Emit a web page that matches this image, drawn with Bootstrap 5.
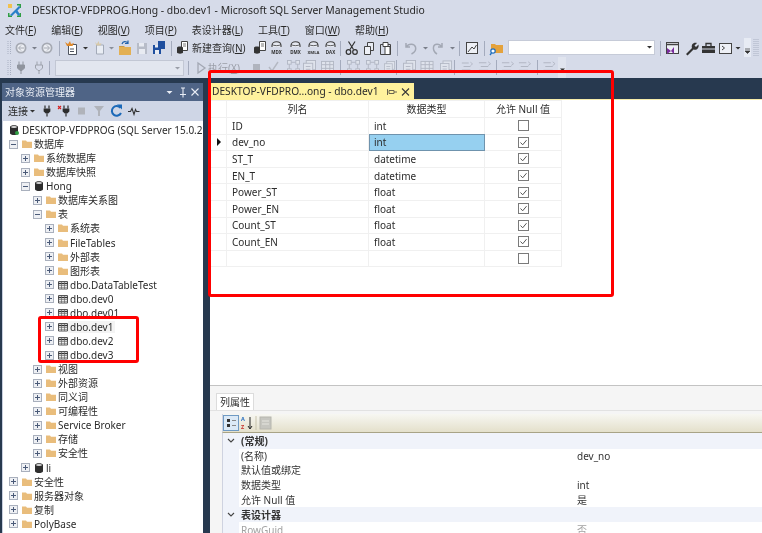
<!DOCTYPE html>
<html lang="zh-CN">
<head>
<meta charset="utf-8">
<title>SSMS</title>
<link href="https://cdn.jsdelivr.net/npm/bootstrap@5.3.0/dist/css/bootstrap.min.css" rel="stylesheet">
<style>
html,body{margin:0;padding:0;width:762px;height:533px;overflow:hidden;background:#d6dbe9;}
body{font-family:"Noto Sans","Noto Sans CJK SC",sans-serif;font-size:10px;line-height:1;color:#222;position:relative;filter:blur(.3px);}
svg{display:block;flex:none;}
.app-title{height:22px;padding:0 0 2px 7px;gap:10px;font-size:10.4px;color:#262626;}
.app-menu{height:16px;padding-left:5px;gap:15px;color:#2a2a2a;}
.app-tb{height:19px;}
.app-tb2{height:21px;}
.tb-txt{width:54px;color:#2a2a2a;white-space:nowrap;}
.tb-txt2{width:31px;color:#9a9ea8;white-space:nowrap;}
.tb-combo{width:147px;height:15px;margin:0 2px;background:#fff;border:1px solid #c6cbd8;}
.tb-rest{flex:1;height:100%;}
.app-main{height:455px;background:#27394f;}
.oe{width:201px;margin-left:2px;padding-top:5px;}
.oe-head{height:18px;padding:0 3px;background:#4f6486;color:#e9edf5;}
.oe-tools{height:20px;background:#cfd6e6;padding-left:6px;color:#2a2a2a;}
.oe-tree{flex:1;background:#fff;padding-top:2px;overflow:hidden;border-left:1px solid #c8cfdf;}
.tree-row{height:14.07px;white-space:nowrap;color:#2b2b2b;}
.lv0{padding-left:6px;}.lv1{padding-left:6px;}.lv2{padding-left:18px;}.lv3{padding-left:30px;}.lv4{padding-left:42px;}
.exp{width:9px;height:9px;margin-right:4px;}
.ico{width:10px;height:10px;margin-right:2px;}
.ico-root{margin-right:3px;}
.hl-row{background:#f4f4f4;padding:1px 2px;margin-left:-2px;}
.work{margin-left:7px;width:552px;padding-top:5px;}
.tab-strip{height:17px;flex:none;border-bottom:1px solid #f6ecaa;}
.doc-tab{width:204px;height:17px;background:#fff29d;padding:0 4px 0 2px;color:#2a2a2a;white-space:nowrap;font-size:10.2px;}
.doc-grid{height:285px;flex:none;background:#fff;}
.col-tbl{border-collapse:collapse;table-layout:fixed;width:351px;color:#2c2c2c;}
.col-tbl td,.col-tbl th{height:16.6px;padding:0 0 0 5px;border:1px solid #f0f0f0;font-weight:400;white-space:nowrap;vertical-align:middle;}
.col-tbl th{text-align:center;padding:0;height:17px;}
.col-tbl td.cm,.col-tbl th.cm{width:16px;padding:0;}
.c-name{width:142px;}.c-type{width:116px;}.c-null{width:77px;}
.col-tbl td.cn{padding:0;}
.col-tbl td.csel{background:#96d0f0;outline:1px solid #6f93ad;outline-offset:-1px;}
.col-tbl svg{margin:auto;}
.prop{flex:1;min-height:0;overflow:hidden;background:#f5f5f5;border-top:1px solid #c3c3c3;}
.prop-tabs{height:25px;padding:7px 0 0 6px;border-bottom:1px solid #e2e2e2;}
.prop-tab{width:38px;height:17px;background:#fff;border:1px solid #dcdcdc;border-bottom:0;color:#2c2c2c;}
.prop-body{padding:3px 0 0 12px;}
.prop-bar{height:19px;background:linear-gradient(#f7f7f2,#e4e0cb);border-bottom:1px solid #a8a386;border-left:1px solid #cfd3e0;}
.prop-grid{background:#fff;border-left:1px solid #cfd3e0;}
.prop-row{height:14.6px;color:#333;}
.prop-gut{width:16px;height:100%;background:#f0f3fa;}
.prop-name{width:336px;padding-left:2px;}
.prop-val{padding-left:2px;}
.prop-sec{height:15.5px;background:#f0f3fa;font-weight:700;color:#333;}
.prop-off{color:#a2a2a2;}
.red-box{position:absolute;border:3px solid #f00;border-radius:3px;pointer-events:none;}
.red-a{left:208px;top:70px;width:406px;height:227px;}
.red-b{left:38px;top:316px;width:101px;height:47px;}
</style>
</head>
<body>
<svg width="0" height="0" class="position-absolute">
<defs>
<symbol id="plus" viewBox="0 0 9 9"><rect x=".5" y=".5" width="8" height="8" fill="#eef0f4" stroke="#a9b0bd"/><path d="M2 4.500h5M4.500 2v5" stroke="#4a5a78"/></symbol>
<symbol id="minus" viewBox="0 0 9 9"><rect x=".5" y=".5" width="8" height="8" fill="#eef0f4" stroke="#a9b0bd"/><path d="M2 4.500h5" stroke="#4a5a78"/></symbol>
<symbol id="folder" viewBox="0 0 10 10"><path d="M0 1.500h4l1 1.200h5V9H0z" fill="#e9bd7c"/></symbol>
<symbol id="db" viewBox="0 0 10 10"><path d="M1 2c0-2.400 8-2.400 8 0v6.200c0 2.400-8 2.400-8 0z" fill="#2e2e2e"/><ellipse cx="5" cy="2" rx="3" ry="1" fill="#d8d8d8"/></symbol>
<symbol id="tbl" viewBox="0 0 10 10"><path d="M.5 1.500h9v7.500h-9z" fill="#fff" stroke="#555"/><path d="M.5 3.500h9" stroke="#333" stroke-width="1.500"/><path d="M.5 5.500h9M.5 7.300h9M3.500 2v7M6.500 2v7" stroke="#666" stroke-width=".7"/></symbol>
<symbol id="chk" viewBox="0 0 11 11"><rect x=".5" y=".5" width="10" height="10" fill="#fff" stroke="#7a7a7a"/><path d="M2.500 5.500l2.200 2.300 3.800-4.600" fill="none" stroke="#555"/></symbol>
<symbol id="unchk" viewBox="0 0 11 11"><rect x=".5" y=".5" width="10" height="10" fill="#fff" stroke="#7a7a7a"/></symbol>
<symbol id="dome" viewBox="0 0 15 14"><path d="M3 7V5.500C3 .5 12 .5 12 5.500V7" fill="#e6e9f1" stroke="#3d3d3d" stroke-width="1.100"/><path d="M3 4.500c1.500 1.500 7.500 1.500 9 0" fill="none" stroke="#3d3d3d" stroke-width=".8"/></symbol>
<symbol id="plug" viewBox="0 0 10 14"><path d="M2.500 0v4M7.500 0v4" stroke="currentColor" stroke-width="1.500"/><path d="M.8 4h8.400v3.500L6.500 10h-3L.8 7.500z" fill="currentColor"/><path d="M5 10v4" stroke="currentColor" stroke-width="1.500"/></symbol>
<symbol id="nodes" viewBox="0 0 14 14"><g fill="#dfe3ec" stroke="#b2b7c4"><rect x=".5" y=".5" width="4" height="4"/><rect x="9.500" y=".5" width="4" height="4"/><rect x=".5" y="9.500" width="4" height="4"/><rect x="9.500" y="9.500" width="4" height="4"/></g><path d="M4.500 2.500h5M2.500 4.500v5M11.500 4.500v5" stroke="#b2b7c4"/></symbol>
<symbol id="stack" viewBox="0 0 14 14"><g fill="#dfe3ec" stroke="#b2b7c4"><rect x="3.500" y=".5" width="10" height="10"/><rect x=".5" y="3.500" width="10" height="10"/></g><path d="M3 7h5M3 10h5" stroke="#b2b7c4"/></symbol>
<symbol id="grid2" viewBox="0 0 14 14"><rect x=".5" y="1.500" width="13" height="11" fill="#dfe3ec" stroke="#b2b7c4"/><path d="M.5 5h13M.5 9h13M5 1.500v11M9.500 1.500v11" stroke="#b2b7c4"/></symbol>
<symbol id="lines" viewBox="0 0 14 14"><path d="M1 3h8M3 7h8M1 11h10" stroke="#b2b7c4" stroke-width="1.200"/><path d="M11 2l2.500 2L11 6" fill="none" stroke="#b2b7c4"/></symbol>
</defs>
</svg>

<div class="app-title d-flex align-items-center">
<svg width="15" height="15" viewBox="0 0 15 15"><path d="M1 1h4v1.500H2.500V5H1zM14 1v4h-1.500V2.500H10V1zM1 14v-4h1.500v2.500H5V14zM14 14h-4v-1.500h2.500V10H14z" fill="#2f9e44"/><path d="M1 1h4v4H1z" fill="#f2c14e"/><path d="M3 12l9-9 1.500 1.500-3 3 2.500 4-1.500 1.500-3-3.500-3.500 3.500z" fill="#2a7fc9"/></svg>
<span>DESKTOP-VFDPROG.Hong - dbo.dev1 - Microsoft SQL Server Management Studio</span>
</div>

<div class="app-menu d-flex align-items-center">
<span>文件(<u>F</u>)</span><span>编辑(<u>E</u>)</span><span>视图(<u>V</u>)</span><span>项目(<u>P</u>)</span><span>表设计器(<u>L</u>)</span><span>工具(<u>T</u>)</span><span>窗口(<u>W</u>)</span><span>帮助(<u>H</u>)</span>
</div>

<div class="app-tb d-flex align-items-center">
<svg width="192" height="19" viewBox="0 0 192 19">
<path d="M8 3v14M10.500 3v14" stroke="#a9b0c2" stroke-dasharray="1 1"/>
<circle cx="21" cy="10" r="4.600" fill="#eceef3" stroke="#a6aab3" stroke-width="1.800"/><path d="M24 10h-5M21 7.500L18.500 10l2.500 2.500" fill="none" stroke="#a6aab3"/>
<path d="M32 9h5l-2.500 2.500z" fill="#7a7f8a"/>
<circle cx="47" cy="10" r="4.600" fill="#eceef3" stroke="#a6aab3" stroke-width="1.800"/><path d="M44 10h5M47 7.500l2.500 2.500L47 12.500" fill="none" stroke="#a6aab3"/>
<path d="M59.500 3v15M171.500 3v15" stroke="#a4abbd"/>
<path d="M68.500 6.500h8v10h-8z" fill="#fff" stroke="#4f5560"/><path d="M65 4l3 2 2-3 1 3 3-1-1.500 3H67z" fill="#e08a2c"/><path d="M70 11h4M70 13.500h4" stroke="#4f5560"/>
<path d="M83 9h5l-2.500 2.500z" fill="#333"/>
<path d="M96.500 7h7v9h-7z" fill="#e9edf4" stroke="#a3aab8"/><path d="M95 4l2 2 1.500-3 1 3 2-1-1 2.500h-4z" fill="#d7c9a8"/>
<path d="M109 9h5l-2.500 2.500z" fill="#8a8f9a"/>
<path d="M119 9h12v8h-12z" fill="#e3b054"/><path d="M119 8h5l1 1h-6z" fill="#c99a48"/><path d="M122 6c1-3 4-3 6-1M128 2.500V5.500h-3" fill="none" stroke="#2364ad" stroke-width="1.200"/>
<path d="M137 5h10v11h-10z" fill="#b7bcc8"/><path d="M139 5h5v3.500h-5zM139 11h6v5h-6z" fill="#e8ebf2"/>
<path d="M158 3h7v8h-7z" fill="#1f4f9f"/><path d="M153 7h8v9h-8z" fill="#1f4f9f"/><path d="M155 12h4v4h-4zM155 7h3v2.500h-3z" fill="#e8ebf2"/>
<path d="M181.500 3.500h6v9h-6z" fill="#fff" stroke="#444"/><path d="M183 6h3M183 8h3" stroke="#555" stroke-width=".8"/><path d="M177 9.500c0-1.500 6-1.500 6 0v5c0 1.500-6 1.500-6 0z" fill="#333"/>
</svg>
<span class="tb-txt">新建查询(<u>N</u>)</span>
<svg width="260" height="19" viewBox="247 0 260 19">
<path d="M260.500 3.500h6v9h-6z" fill="#fff" stroke="#444"/><path d="M262 6h3M262 8h3" stroke="#555" stroke-width=".8"/><path d="M255 9.500c0-1.500 6-1.500 6 0v5c0 1.500-6 1.500-6 0z" fill="#333"/>
<use href="#dome" x="270" y="2" width="15" height="14"/><text x="277.500" y="15.500" font-size="4.500" font-weight="700" text-anchor="middle" fill="#333">MDX</text>
<use href="#dome" x="289" y="2" width="15" height="14"/><text x="296.500" y="15.500" font-size="4.500" font-weight="700" text-anchor="middle" fill="#333">DMX</text>
<use href="#dome" x="307" y="2" width="15" height="14"/><text x="314.500" y="15.500" font-size="4.200" font-weight="700" text-anchor="middle" fill="#333">XMLA</text>
<use href="#dome" x="324" y="2" width="15" height="14"/><text x="331.500" y="15.500" font-size="4.500" font-weight="700" text-anchor="middle" fill="#333">DAX</text>
<path d="M341.500 3v15M398.500 3v15M460.500 3v15M485.500 3v15" stroke="#a4abbd"/>
<path d="M349.500 3.500l5 8M356 3.500l-5 8" stroke="#333" stroke-width="1.200"/><circle cx="349.500" cy="14" r="2.300" fill="none" stroke="#333" stroke-width="1.200"/><circle cx="356" cy="14" r="2.300" fill="none" stroke="#333" stroke-width="1.200"/>
<path d="M368.500 4.500h6v8h-6z" fill="#e8ebf2" stroke="#444"/><path d="M365.500 8.500h6v8h-6z" fill="#eef0f6" stroke="#444"/>
<path d="M381.500 6.500h10v10h-10z" fill="#d6dbe9" stroke="#444"/><path d="M384 4.500h5v4h-5z" fill="#fff" stroke="#444"/><path d="M386 8.500h5v8h-5z" fill="#fff" stroke="#444"/>
<path d="M407 5v4h4M407.500 9c2-4 8-3.500 9 0s-1 5.500-4 7" fill="none" stroke="#a3a8b4" stroke-width="1.500"/>
<path d="M424 9h5l-2.500 2.500z" fill="#7a7f8a"/>
<path d="M443 5v4h-4M442.500 9c-2-4-7.500-3.500-8 0s1 5.500 3.500 7" fill="none" stroke="#a3a8b4" stroke-width="1.500"/>
<path d="M451 9h5l-2.500 2.500z" fill="#7a7f8a"/>
<rect x="467.500" y="4.500" width="11" height="11" fill="#eef0f6" stroke="#444"/><path d="M469 14l4-5 2 2 2.500-4" fill="none" stroke="#444"/>
<path d="M492 6h4l1 1h7v8h-12z" fill="#e4a23c"/><circle cx="494" cy="13" r="2.200" fill="#fff" stroke="#1e6fc0" stroke-width="1.200"/><path d="M492.500 15l-1.500 2" stroke="#1e6fc0" stroke-width="1.300"/>
</svg>
<div class="tb-combo d-flex align-items-center justify-content-end"><svg width="9" height="5" viewBox="0 0 9 5"><path d="M2 1h5L4.500 3.500z" fill="#333"/></svg></div>
<svg class="tb-rest" height="19" viewBox="658 0 104 19" preserveAspectRatio="xMinYMid meet">
<path d="M661.500 3v15" stroke="#a4abbd"/>
<rect x="667.500" y="4.500" width="12" height="11" fill="#eef0f6" stroke="#444"/><path d="M667.500 6.500h12" stroke="#444" stroke-width="1.500"/><path d="M668 10l4 3 3-4v7l-3-3-4 3z" fill="#7a2c9e"/>
<path d="M687 16l6-6c-1-3 1-6 5-5l-2.500 2.500 1.500 1.500 2.500-2.500c.8 4-2 6-5 5l-6 6z" fill="#333"/>
<path d="M703 8h13v7h-13z" fill="#333"/><path d="M707 8V5.500h5V8" fill="none" stroke="#333" stroke-width="1.300"/><path d="M703 11h13" stroke="#d6dbe9"/>
<rect x="720.500" y="5.500" width="12" height="10" fill="#eef0f6" stroke="#444"/><path d="M723 8l2.500 2-2.500 2" fill="none" stroke="#444"/>
<path d="M736.500 9h5L739 11.500z" fill="#333"/>
<rect x="745" y="0" width="7" height="19" fill="#e7ebf4"/><path d="M746 11h5M746 13h5l-2.500 2.500z" fill="#333" stroke="#333" stroke-width=".7"/>
<path d="M755 1v17M757 1v17M759 1v17" stroke="#aab1c3" stroke-dasharray="1 1"/>
</svg>
</div>

<div class="app-tb2 d-flex align-items-center">
<svg width="208" height="21" viewBox="0 0 208 21">
<path d="M8 3v15M10.500 3v15" stroke="#a9b0c2" stroke-dasharray="1 1"/>
<path d="M19 4.500v3.500M23 4.500v3.500M17.500 8h7v3l-2.500 2.500h-2L17.500 11zM21 13v4" fill="#8f949e" stroke="#8f949e"/>
<path d="M37 4.500v3.500M41 4.500v3.500M35.500 8h7v3l-2.500 2.500h-2L35.500 11zM39 13v4" fill="none" stroke="#9da2ac"/>
<path d="M49.500 4v14M188.500 4v14" stroke="#a4abbd"/>
<rect x="55.500" y="3.500" width="128" height="15" fill="#e2e6ef" stroke="#c2c7d4"/><path d="M175 10h5l-2.500 2.500z" fill="#9a9ea8"/>
<path d="M198 6v10l7-5z" fill="none" stroke="#a3a8b4" stroke-width="1.300"/>
</svg>
<span class="tb-txt2">执行(<u>X</u>)</span>
<svg width="327" height="21" viewBox="239 0 327 21">
<rect x="253" y="7" width="7" height="7" fill="#b0b4be"/>
<path d="M269 10l3 4 6-9" fill="none" stroke="#b4b8c2" stroke-width="1.400"/>
<use href="#nodes" x="287" y="3" width="13" height="13"/><use href="#stack" x="303" y="3" width="13" height="13"/><use href="#grid2" x="321" y="3" width="13" height="13"/>
<path d="M340.500 3v15M396.500 3v15M454.500 3v15M496.500 3v15M537.500 3v15" stroke="#a4abbd"/>
<use href="#nodes" x="347" y="3" width="13" height="13"/><use href="#nodes" x="366" y="3" width="13" height="13"/><use href="#stack" x="384" y="3" width="11" height="13"/>
<use href="#stack" x="403" y="3" width="13" height="13"/><use href="#grid2" x="420" y="3" width="14" height="13"/><use href="#stack" x="440" y="3" width="12" height="13"/>
<use href="#lines" x="461" y="3" width="12" height="13"/><use href="#lines" x="478" y="3" width="13" height="13"/>
<use href="#lines" x="501" y="3" width="13" height="13"/><use href="#lines" x="518" y="3" width="13" height="13"/>
<use href="#lines" x="542" y="3" width="14" height="13"/>
<rect x="558" y="0" width="8" height="21" fill="#e0e4ee"/><path d="M560 11.500h5l-2.500 2.500z" fill="#333"/>
</svg>
</div>

<div class="app-main d-flex">
<section class="oe d-flex flex-column">
<div class="oe-head d-flex align-items-center justify-content-between">
<span>对象资源管理器</span>
<svg width="36" height="12" viewBox="0 0 36 12"><path d="M2.500 5h6L5.500 8z" fill="#e9edf5"/><path d="M19 1.500v7M16 8.500h6M17 2h4M19 8.500v3" fill="none" stroke="#e9edf5" stroke-width="1.100"/><path d="M29.500 2.500l7 7M36.500 2.500l-7 7" stroke="#e9edf5" stroke-width="1.100" transform="translate(-2 0)"/></svg>
</div>
<div class="oe-tools d-flex align-items-center">
<span>连接</span>
<svg width="135" height="20" viewBox="28 0 135 20">
<path d="M30 9h5l-2.500 2.500z" fill="#333"/>
<use href="#plug" x="43" y="4" width="8" height="12" color="#2d2d2d"/>
<use href="#plug" x="62" y="4" width="8" height="12" color="#2d2d2d"/><path d="M58 5l3 3M61 5l-3 3" stroke="#d61f1f" stroke-width="1.100"/>
<rect x="78" y="6.500" width="7" height="7" fill="#b0b3ba"/>
<path d="M94 5h10l-4 5v5h-2v-5z" fill="#b0b3ba"/>
<path d="M120.500 7a4.800 4.800 0 1 0 .5 5" fill="none" stroke="#1b69b8" stroke-width="2"/><path d="M117 3.500h5v5z" fill="#1b69b8"/>
<path d="M128 10.500h2.500l1.500-3 2 6 1.500-5 1 2h3" fill="none" stroke="#333" stroke-width="1.100"/>
</svg>
</div>
<div class="oe-tree">
<div class="tree-row lv0 d-flex align-items-center"><svg class="ico ico-root" viewBox="0 0 10 10"><use href="#db"/><circle cx="8" cy="8" r="2" fill="#2f9e44"/></svg><span>DESKTOP-VFDPROG (SQL Server 15.0.2</span></div>
<div class="tree-row lv1 d-flex align-items-center"><svg class="exp"><use href="#minus"/></svg><svg class="ico"><use href="#folder"/></svg><span>数据库</span></div>
<div class="tree-row lv2 d-flex align-items-center"><svg class="exp"><use href="#plus"/></svg><svg class="ico"><use href="#folder"/></svg><span>系统数据库</span></div>
<div class="tree-row lv2 d-flex align-items-center"><svg class="exp"><use href="#plus"/></svg><svg class="ico"><use href="#folder"/></svg><span>数据库快照</span></div>
<div class="tree-row lv2 d-flex align-items-center"><svg class="exp"><use href="#minus"/></svg><svg class="ico"><use href="#db"/></svg><span>Hong</span></div>
<div class="tree-row lv3 d-flex align-items-center"><svg class="exp"><use href="#plus"/></svg><svg class="ico"><use href="#folder"/></svg><span>数据库关系图</span></div>
<div class="tree-row lv3 d-flex align-items-center"><svg class="exp"><use href="#minus"/></svg><svg class="ico"><use href="#folder"/></svg><span>表</span></div>
<div class="tree-row lv4 d-flex align-items-center"><svg class="exp"><use href="#plus"/></svg><svg class="ico"><use href="#folder"/></svg><span>系统表</span></div>
<div class="tree-row lv4 d-flex align-items-center"><svg class="exp"><use href="#plus"/></svg><svg class="ico"><use href="#folder"/></svg><span>FileTables</span></div>
<div class="tree-row lv4 d-flex align-items-center"><svg class="exp"><use href="#plus"/></svg><svg class="ico"><use href="#folder"/></svg><span>外部表</span></div>
<div class="tree-row lv4 d-flex align-items-center"><svg class="exp"><use href="#plus"/></svg><svg class="ico"><use href="#folder"/></svg><span>图形表</span></div>
<div class="tree-row lv4 d-flex align-items-center"><svg class="exp"><use href="#plus"/></svg><svg class="ico"><use href="#tbl"/></svg><span>dbo.DataTableTest</span></div>
<div class="tree-row lv4 d-flex align-items-center"><svg class="exp"><use href="#plus"/></svg><svg class="ico"><use href="#tbl"/></svg><span>dbo.dev0</span></div>
<div class="tree-row lv4 d-flex align-items-center"><svg class="exp"><use href="#plus"/></svg><svg class="ico"><use href="#tbl"/></svg><span>dbo.dev01</span></div>
<div class="tree-row lv4 d-flex align-items-center"><svg class="exp"><use href="#plus"/></svg><svg class="ico"><use href="#tbl"/></svg><span class="hl-row">dbo.dev1</span></div>
<div class="tree-row lv4 d-flex align-items-center"><svg class="exp"><use href="#plus"/></svg><svg class="ico"><use href="#tbl"/></svg><span>dbo.dev2</span></div>
<div class="tree-row lv4 d-flex align-items-center"><svg class="exp"><use href="#plus"/></svg><svg class="ico"><use href="#tbl"/></svg><span>dbo.dev3</span></div>
<div class="tree-row lv3 d-flex align-items-center"><svg class="exp"><use href="#plus"/></svg><svg class="ico"><use href="#folder"/></svg><span>视图</span></div>
<div class="tree-row lv3 d-flex align-items-center"><svg class="exp"><use href="#plus"/></svg><svg class="ico"><use href="#folder"/></svg><span>外部资源</span></div>
<div class="tree-row lv3 d-flex align-items-center"><svg class="exp"><use href="#plus"/></svg><svg class="ico"><use href="#folder"/></svg><span>同义词</span></div>
<div class="tree-row lv3 d-flex align-items-center"><svg class="exp"><use href="#plus"/></svg><svg class="ico"><use href="#folder"/></svg><span>可编程性</span></div>
<div class="tree-row lv3 d-flex align-items-center"><svg class="exp"><use href="#plus"/></svg><svg class="ico"><use href="#folder"/></svg><span>Service Broker</span></div>
<div class="tree-row lv3 d-flex align-items-center"><svg class="exp"><use href="#plus"/></svg><svg class="ico"><use href="#folder"/></svg><span>存储</span></div>
<div class="tree-row lv3 d-flex align-items-center"><svg class="exp"><use href="#plus"/></svg><svg class="ico"><use href="#folder"/></svg><span>安全性</span></div>
<div class="tree-row lv2 d-flex align-items-center"><svg class="exp"><use href="#plus"/></svg><svg class="ico"><use href="#db"/></svg><span>li</span></div>
<div class="tree-row lv1 d-flex align-items-center"><svg class="exp"><use href="#plus"/></svg><svg class="ico"><use href="#folder"/></svg><span>安全性</span></div>
<div class="tree-row lv1 d-flex align-items-center"><svg class="exp"><use href="#plus"/></svg><svg class="ico"><use href="#folder"/></svg><span>服务器对象</span></div>
<div class="tree-row lv1 d-flex align-items-center"><svg class="exp"><use href="#plus"/></svg><svg class="ico"><use href="#folder"/></svg><span>复制</span></div>
<div class="tree-row lv1 d-flex align-items-center"><svg class="exp"><use href="#plus"/></svg><svg class="ico"><use href="#folder"/></svg><span>PolyBase</span></div>
</div>
</section>

<section class="work d-flex flex-column">
<div class="tab-strip d-flex">
<div class="doc-tab d-flex align-items-center justify-content-between">
<span>DESKTOP-VFDPRO...ong - dbo.dev1</span>
<svg width="24" height="10" viewBox="0 0 24 10"><path d="M3 3.500h5v3H3zM8 5h3M1.500 2v6" fill="none" stroke="#6a6550"/><path d="M17 1.500l7 7M24 1.500l-7 7" stroke="#3a3a3a" stroke-width="1.100" transform="translate(-1 0)"/></svg>
</div>
</div>
<div class="doc-grid">
<table class="col-tbl">
<tr><th class="cm"></th><th class="c-name">列名</th><th class="c-type">数据类型</th><th class="c-null">允许 Null 值</th></tr>
<tr><td class="cm"></td><td>ID</td><td>int</td><td class="cn"><svg width="11" height="11"><use href="#unchk"/></svg></td></tr>
<tr><td class="cm"><svg width="6" height="8" viewBox="0 0 6 8"><path d="M1 0l4 4-4 4z" fill="#111"/></svg></td><td>dev_no</td><td class="csel">int</td><td class="cn"><svg width="11" height="11"><use href="#chk"/></svg></td></tr>
<tr><td class="cm"></td><td>ST_T</td><td>datetime</td><td class="cn"><svg width="11" height="11"><use href="#chk"/></svg></td></tr>
<tr><td class="cm"></td><td>EN_T</td><td>datetime</td><td class="cn"><svg width="11" height="11"><use href="#chk"/></svg></td></tr>
<tr><td class="cm"></td><td>Power_ST</td><td>float</td><td class="cn"><svg width="11" height="11"><use href="#chk"/></svg></td></tr>
<tr><td class="cm"></td><td>Power_EN</td><td>float</td><td class="cn"><svg width="11" height="11"><use href="#chk"/></svg></td></tr>
<tr><td class="cm"></td><td>Count_ST</td><td>float</td><td class="cn"><svg width="11" height="11"><use href="#chk"/></svg></td></tr>
<tr><td class="cm"></td><td>Count_EN</td><td>float</td><td class="cn"><svg width="11" height="11"><use href="#chk"/></svg></td></tr>
<tr><td class="cm"></td><td></td><td></td><td class="cn"><svg width="11" height="11"><use href="#unchk"/></svg></td></tr>
</table>
</div>
<div class="prop">
<div class="prop-tabs"><div class="prop-tab d-flex align-items-center justify-content-center">列属性</div></div>
<div class="prop-body">
<div class="prop-bar d-flex align-items-center">
<svg width="60" height="18" viewBox="0 0 60 18"><rect x=".5" y="1.500" width="15" height="15" fill="#dceaf7" stroke="#6f9ac4"/><path d="M4 5h3v3H4zM4 10h3v3H4z" fill="#333"/><path d="M9 6.500h4M9 11.500h4" stroke="#888"/><text x="18" y="7" font-size="5.500" font-weight="700" fill="#2a6fc0">A</text><text x="18" y="15" font-size="5.500" font-weight="700" fill="#c8322c">Z</text><path d="M27 3v11M25 12l2 3 2-3" fill="none" stroke="#222"/><path d="M33 2v14" stroke="#c8c4ad"/><rect x="37" y="3" width="11" height="12" fill="#c6c6c0" stroke="#b6b6ae"/><path d="M39 7h7M39 10h7" stroke="#e6e6e0"/></svg>
</div>
<div class="prop-grid">
<div class="prop-sec d-flex align-items-center"><div class="prop-gut d-flex align-items-center justify-content-center"><svg width="8" height="6" viewBox="0 0 8 6"><path d="M1 1l3 3 3-3" fill="none" stroke="#444" stroke-width="1.100"/></svg></div><span class="prop-name">(常规)</span></div>
<div class="prop-row d-flex align-items-center"><div class="prop-gut"></div><span class="prop-name">(名称)</span><span class="prop-val">dev_no</span></div>
<div class="prop-row d-flex align-items-center"><div class="prop-gut"></div><span class="prop-name">默认值或绑定</span></div>
<div class="prop-row d-flex align-items-center"><div class="prop-gut"></div><span class="prop-name">数据类型</span><span class="prop-val">int</span></div>
<div class="prop-row d-flex align-items-center"><div class="prop-gut"></div><span class="prop-name">允许 Null 值</span><span class="prop-val">是</span></div>
<div class="prop-sec d-flex align-items-center"><div class="prop-gut d-flex align-items-center justify-content-center"><svg width="8" height="6" viewBox="0 0 8 6"><path d="M1 1l3 3 3-3" fill="none" stroke="#444" stroke-width="1.100"/></svg></div><span class="prop-name">表设计器</span></div>
<div class="prop-row prop-off d-flex align-items-center"><div class="prop-gut"></div><span class="prop-name">RowGuid</span><span class="prop-val">否</span></div>
</div>
</div>
</div>
</section>
</div>

<div class="red-box red-a"></div>
<div class="red-box red-b"></div>
<script src="https://cdn.jsdelivr.net/npm/bootstrap@5.3.0/dist/js/bootstrap.bundle.min.js"></script>
</body>
</html>
